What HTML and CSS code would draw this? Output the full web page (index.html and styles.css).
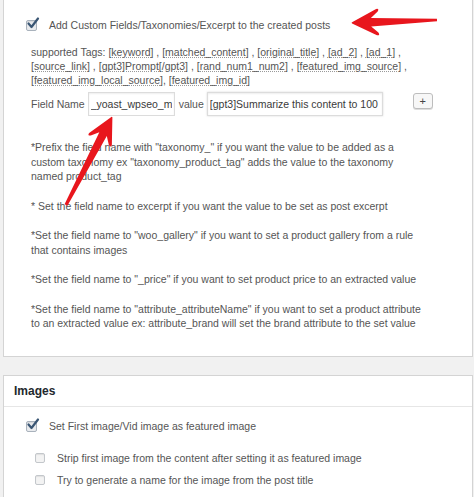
FILE: index.html
```html
<!DOCTYPE html>
<html>
<head>
<meta charset="utf-8">
<link rel="stylesheet" href="styles.css">
</head>
<body>
<div class="page">
  <div class="panel panel-main">
    <div class="check-row">
      <span class="cb checked"><svg class="tick" width="14" height="13" viewBox="0 0 14 13"><path d="M2.5 6.5 L5.5 10 L12 1.5" fill="none" stroke="#3a5674" stroke-width="2.2" stroke-linecap="round" stroke-linejoin="round"/></svg></span>
      <span>Add Custom Fields/Taxonomies/Excerpt to the created posts</span>
    </div>
    <div class="tags">supported Tags: <abbr>[keyword]</abbr> , <abbr>[matched_content]</abbr> , <abbr>[original_title]</abbr> , <abbr>[ad_2]</abbr> , <abbr>[ad_1]</abbr> ,<br><abbr>[source_link]</abbr> , <abbr>[gpt3]Prompt[/gpt3]</abbr> , <abbr>[rand_num1_num2]</abbr> , <abbr>[featured_img_source]</abbr> ,<br><abbr>[featured_img_local_source]</abbr>, <abbr>[featured_img_id]</abbr></div>
    <div class="field-row">
      <span class="lbl">Field Name</span>
      <input class="inp inp-name" type="text" value="_yoast_wpseo_metadesc">
      <span class="lbl lbl-value">value</span>
      <input class="inp inp-value" type="text" value="[gpt3]Summarize this content to 100 characters[/gpt3]">
      <button class="plus">+</button>
    </div>
    <div class="notes">
      <p>*Prefix the field name with "taxonomy_" if you want the value to be added as a<br>custom taxonomy ex "taxonomy_product_tag" adds the value to the taxonomy<br>named product_tag</p>
      <p>* Set the field name to excerpt if you want the value to be set as post excerpt</p>
      <p>*Set the field name to "woo_gallery" if you want to set a product gallery from a rule<br>that contains images</p>
      <p>*Set the field name to "_price" if you want to set product price to an extracted value</p>
      <p>*Set the field name to "attribute_attributeName" if you want to set a product attribute<br>to an extracted value ex: attribute_brand will set the brand attribute to the set value</p>
    </div>
  </div>

  <div class="panel panel-images">
    <div class="ph">Images</div>
    <div class="pb">
      <div class="check-row">
        <span class="cb checked"><svg class="tick" width="14" height="13" viewBox="0 0 14 13"><path d="M2.5 6.5 L5.5 10 L12 1.5" fill="none" stroke="#3a5674" stroke-width="2.2" stroke-linecap="round" stroke-linejoin="round"/></svg></span>
        <span>Set First image/Vid image as featured image</span>
      </div>
      <div class="check-row sub first-sub">
        <span class="cb"></span>
        <span>Strip first image from the content after setting it as featured image</span>
      </div>
      <div class="check-row sub">
        <span class="cb"></span>
        <span>Try to generate a name for the image from the post title</span>
      </div>
    </div>
  </div>
</div>

<svg class="arrows" width="474" height="497" viewBox="0 0 474 497">
  <g transform="translate(437 20) rotate(178)">
    <path d="M0 -1.3 L66 -4.2 L59 -10.5 Q57 -13.8 60.5 -13.2 L85 -0.6 Q86 0 85 0.6 L60.5 13.2 Q57 13.8 59 10.5 L66 4.2 L0 1.3 Z" fill="#e8161d"/>
  </g>
  <g transform="translate(66 205) rotate(-62.4)">
    <path d="M0 -1.6 L80 -4.2 L73 -10.2 Q71 -13.3 74.5 -12.8 L99 -0.6 Q100 0 99 0.6 L74.5 12.8 Q71 13.3 73 10.2 L80 4.2 L0 1.6 Z" fill="#e8161d"/>
  </g>
</svg>
</body>
</html>
```

FILE: styles.css
```css
* { box-sizing: border-box; }

body {
  margin: 0;
  width: 474px;
  height: 497px;
  overflow: hidden;
  position: relative;
  background: #f1f1f1;
  font-family: "Liberation Sans", Arial, sans-serif;
  font-size: 10.5px;
  line-height: 14px;
  color: #555;
}

.page {
  padding: 0 1px 0 3px;
}

.panel {
  background: #fff;
  border: 1px solid #d4d4d4;
}

.panel-main {
  border-top: 0;
  padding: 18px 0 25.5px;
}

.check-row {
  display: flex;
  align-items: center;
  gap: 12px;
  padding-left: 22px;
  height: 14px;
  white-space: nowrap;
}

.cb {
  position: relative;
  flex: none;
  width: 10px;
  height: 10px;
  border: 1px solid #c3c7cb;
  border-radius: 2px;
  background: #f3f3f3;
  box-shadow: inset 0 1px 1px rgba(0, 0, 0, 0.08);
}

.cb.checked {
  width: 11px;
  height: 11px;
  background: #e9ebee;
  border-color: #a9b2bc;
}

.tick {
  position: absolute;
  left: -1px;
  top: -4px;
}

.tags {
  margin-top: 13px;
  padding-left: 27px;
  white-space: nowrap;
}

.tags abbr {
  text-decoration: underline dotted #9a9a9a;
  text-underline-offset: 1px;
}

.field-row {
  display: flex;
  align-items: center;
  margin-top: 5px;
  padding-left: 27px;
  height: 24px;
}

.lbl {
  flex: none;
  white-space: nowrap;
}

.inp {
  flex: none;
  height: 24px;
  padding: 0 2px;
  border: 1px solid #dcdcdc;
  background: #fff;
  box-shadow: inset 0 1px 2px rgba(0, 0, 0, 0.07);
  font-family: "Liberation Sans", Arial, sans-serif;
  font-size: 10.5px;
  color: #3a3a3a;
  outline: none;
}

.inp-name {
  width: 87px;
  margin: 0 4px 0 3px;
}

.inp-value {
  width: 176px;
  margin-left: 3px;
  box-shadow: 0 0 2px rgba(0, 0, 0, 0.15), inset 0 1px 2px rgba(0, 0, 0, 0.07);
}

.plus {
  flex: none;
  align-self: flex-start;
  margin: 1px 0 0 30px;
  width: 20px;
  height: 16px;
  padding: 0;
  border: 1px solid #bdbdbd;
  border-radius: 3px;
  background: #f7f7f7;
  box-shadow: 0 1px 0 #ddd;
  font-family: "Liberation Sans", Arial, sans-serif;
  font-size: 11px;
  line-height: 13px;
  color: #444;
}

.notes {
  margin-top: 24px;
  padding-left: 27px;
  white-space: nowrap;
}

.notes p {
  margin: 15px 0 0;
  line-height: 14.5px;
}

.notes p:first-child {
  margin-top: 0;
}

.panel-images {
  margin-top: 18px;
  height: 130px;
  border-bottom: 0;
}

.ph {
  height: 31px;
  padding-left: 10px;
  border-bottom: 1px solid #e6e6e6;
  display: flex;
  align-items: center;
  font-size: 12px;
  font-weight: bold;
  color: #23282d;
}

.pb {
  padding-top: 12px;
}

.check-row.sub {
  padding-left: 31px;
  margin-top: 8px;
}

.check-row.first-sub {
  margin-top: 18px;
}

.arrows {
  position: absolute;
  left: 0;
  top: 0;
  pointer-events: none;
}
```
